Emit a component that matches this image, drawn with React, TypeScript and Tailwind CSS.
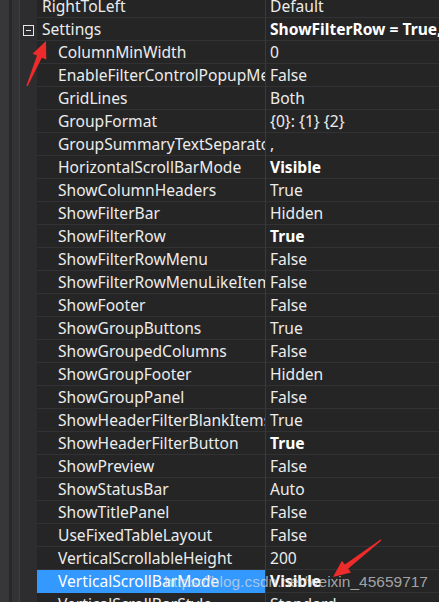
import React from "react";

type Row = { name: string; value: string; bold?: boolean; level: 0 | 1; category?: boolean; selected?: boolean };

const rows: Row[] = [
  { name: "RightToLeft", value: "Default", level: 0 },
  { name: "Settings", value: "ShowFilterRow = True, ShowFilterRowMenu = True", bold: true, level: 0, category: true },
  { name: "ColumnMinWidth", value: "0", level: 1 },
  { name: "EnableFilterControlPopupMenuScrolling", value: "False", level: 1 },
  { name: "GridLines", value: "Both", level: 1 },
  { name: "GroupFormat", value: "{0}: {1} {2}", level: 1 },
  { name: "GroupSummaryTextSeparator", value: ",", level: 1 },
  { name: "HorizontalScrollBarMode", value: "Visible", bold: true, level: 1 },
  { name: "ShowColumnHeaders", value: "True", level: 1 },
  { name: "ShowFilterBar", value: "Hidden", level: 1 },
  { name: "ShowFilterRow", value: "True", bold: true, level: 1 },
  { name: "ShowFilterRowMenu", value: "False", level: 1 },
  { name: "ShowFilterRowMenuLikeItem", value: "False", level: 1 },
  { name: "ShowFooter", value: "False", level: 1 },
  { name: "ShowGroupButtons", value: "True", level: 1 },
  { name: "ShowGroupedColumns", value: "False", level: 1 },
  { name: "ShowGroupFooter", value: "Hidden", level: 1 },
  { name: "ShowGroupPanel", value: "False", level: 1 },
  { name: "ShowHeaderFilterBlankItems", value: "True", level: 1 },
  { name: "ShowHeaderFilterButton", value: "True", bold: true, level: 1 },
  { name: "ShowPreview", value: "False", level: 1 },
  { name: "ShowStatusBar", value: "Auto", level: 1 },
  { name: "ShowTitlePanel", value: "False", level: 1 },
  { name: "UseFixedTableLayout", value: "False", level: 1 },
  { name: "VerticalScrollableHeight", value: "200", level: 1 },
  { name: "VerticalScrollBarMode", value: "Visible", bold: true, level: 1, selected: true },
  { name: "VerticalScrollBarStyle", value: "Standard", level: 1 },
];

function arrowPoints(tx: number, ty: number, hx: number, hy: number) {
  const dx = hx - tx;
  const dy = hy - ty;
  const len = Math.hypot(dx, dy);
  const ux = dx / len;
  const uy = dy / len;
  const px = -uy;
  const py = ux;
  const headLen = 17;
  const headW = 7.5;
  const shaftW = 2.6;
  const bx = hx - ux * headLen;
  const by = hy - uy * headLen;
  const pts = [
    [tx + px * 0.6, ty + py * 0.6],
    [bx + px * shaftW, by + py * shaftW],
    [bx + px * headW, by + py * headW],
    [hx, hy],
    [bx - px * headW, by - py * headW],
    [bx - px * shaftW, by - py * shaftW],
    [tx - px * 0.6, ty - py * 0.6],
  ];
  return pts.map((p) => p.map((v) => v.toFixed(1)).join(",")).join(" ");
}

function Gutter({ category }: { category?: boolean }) {
  return (
    <div className="flex h-full shrink-0">
      <div className="w-[9px] bg-[#37373a]" />
      <div className="w-[3px] bg-[#28282a]" />
      <div className="w-[7px] bg-[#333336]" />
      <div className="w-[1px] bg-[#3e3e42]" />
      <div className="w-[17px] bg-[#2d2d30] flex items-center pl-[3px] pt-[1px]">
        {category && (
          <div className="w-[11px] h-[11px] border border-[#e6e6e6] flex items-center justify-center">
            <div className="w-[5px] h-[1px] bg-[#e6e6e6]" />
          </div>
        )}
      </div>
    </div>
  );
}

export default function App() {
  return (
    <div
      className="relative w-[439px] h-[602px] overflow-hidden bg-[#252526] text-[#ececec] text-[15.6px]"
      style={{ fontFamily: '"Noto Sans", "Noto Sans CJK SC", sans-serif' }}
    >
      <div className="-mt-[5px] flex flex-col">
        {rows.map((r) => (
          <div key={r.name} className="flex h-[23px]">
            <Gutter category={r.category} />
            <div
              className={
                "w-[228px] shrink-0 flex items-center pt-[2px] overflow-hidden whitespace-nowrap border-b " +
                (r.selected ? "bg-[#3399ff] border-[#3399ff] text-white " : "border-[#323235] ") +
                (r.level === 1 ? "pl-[21px]" : "pl-[5px]")
              }
            >
              {r.name}
            </div>
            <div className="w-[1px] shrink-0 bg-[#3a3a3e]" />
            <div
              className={
                "flex-1 flex items-center pt-[2px] pl-[4px] overflow-hidden whitespace-nowrap border-b border-[#323235] " +
                (r.bold ? "font-bold text-white" : "")
              }
            >
              {r.value}
            </div>
          </div>
        ))}
      </div>

      <div
        className="absolute right-[11px] top-[571px] h-[21px] flex items-center text-[15.5px] text-[#dcdcdc]/70 whitespace-nowrap pointer-events-none"
        style={{ fontFamily: '"Liberation Sans", Arial, sans-serif' }}
      >
        https://blog.csdn.net/weixin_45659717
      </div>

      <svg className="absolute inset-0 pointer-events-none" width="439" height="602">
        <polygon points={arrowPoints(27, 86, 46, 41)} fill="#ee2b2b" />
        <polygon points={arrowPoints(381, 540, 333, 577)} fill="#ee2b2b" />
      </svg>
    </div>
  );
}
